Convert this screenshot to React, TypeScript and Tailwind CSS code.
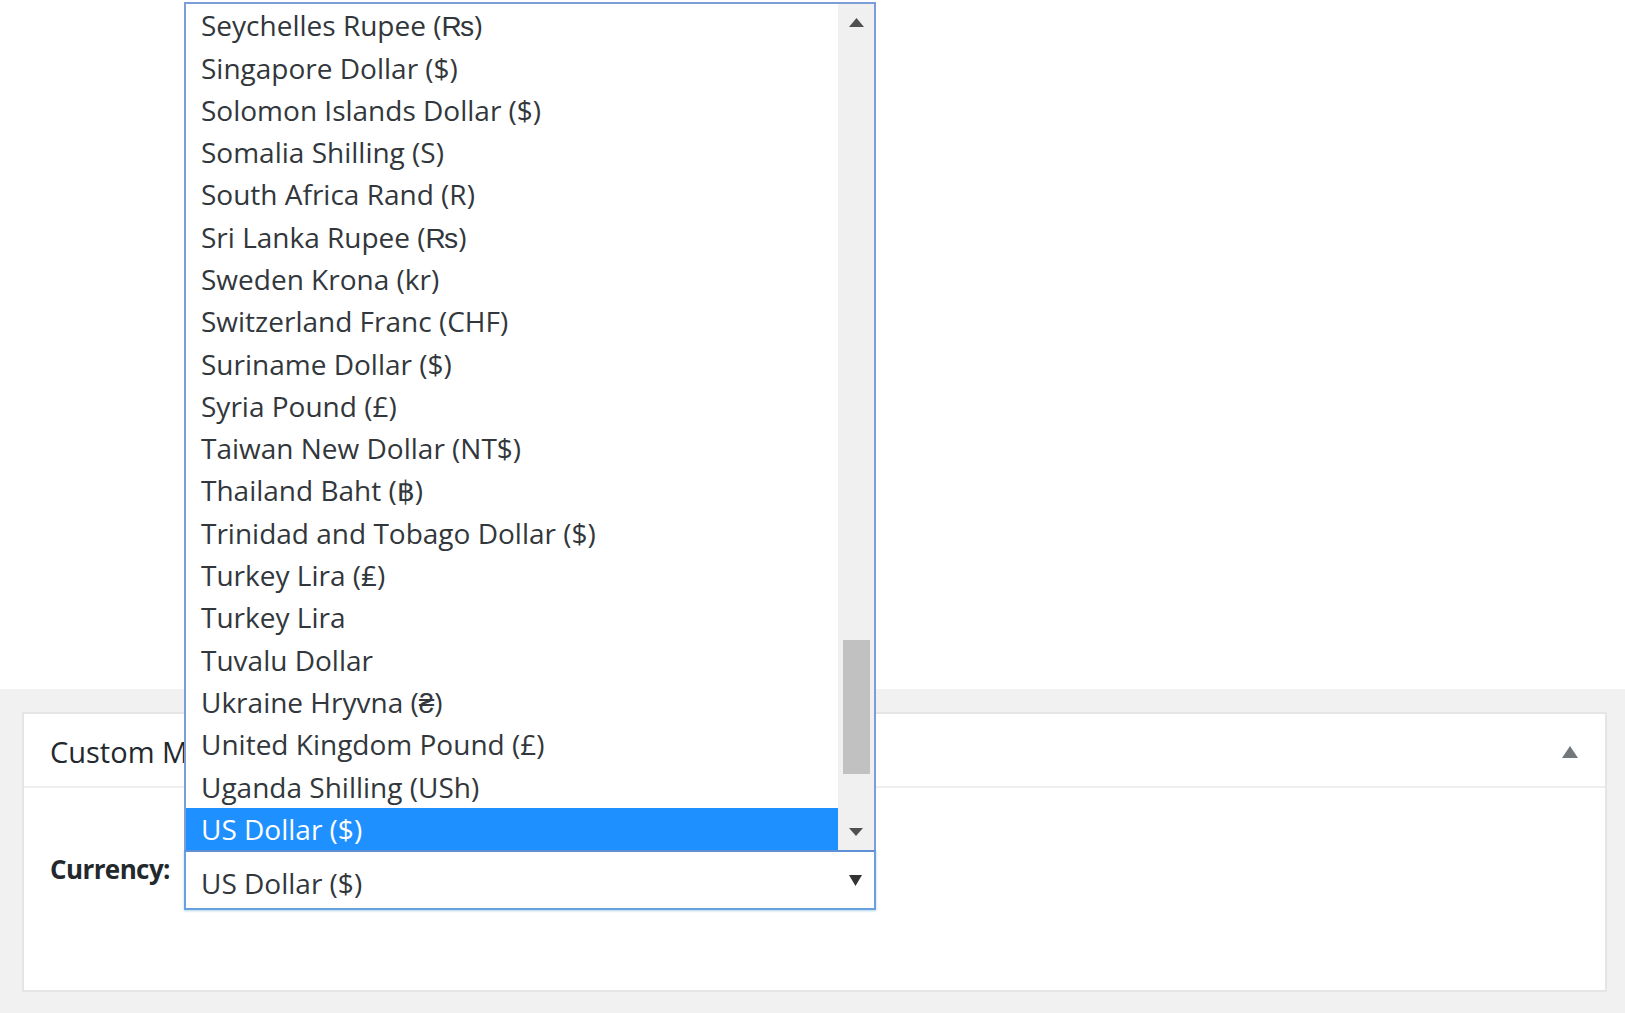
import React from 'react';

const currencies = [
  'Seychelles Rupee (₨)',
  'Singapore Dollar ($)',
  'Solomon Islands Dollar ($)',
  'Somalia Shilling (S)',
  'South Africa Rand (R)',
  'Sri Lanka Rupee (₨)',
  'Sweden Krona (kr)',
  'Switzerland Franc (CHF)',
  'Suriname Dollar ($)',
  'Syria Pound (£)',
  'Taiwan New Dollar (NT$)',
  'Thailand Baht (฿)',
  'Trinidad and Tobago Dollar ($)',
  'Turkey Lira (₤)',
  'Turkey Lira',
  'Tuvalu Dollar',
  'Ukraine Hryvna (₴)',
  'United Kingdom Pound (£)',
  'Uganda Shilling (USh)',
  'US Dollar ($)',
];

const selected = 'US Dollar ($)';

function Triangle({ up, className }: { up?: boolean; className?: string }) {
  return (
    <svg viewBox="0 0 10 6" className={className} preserveAspectRatio="none">
      {up ? <polygon points="5,0 10,6 0,6" fill="currentColor" /> : <polygon points="0,0 10,0 5,6" fill="currentColor" />}
    </svg>
  );
}

function Scrollbar() {
  return (
    <div className="flex w-[36px] flex-col bg-[#f0f0f0]">
      <div className="flex h-[36px] items-center justify-center text-[#505050]">
        <Triangle up className="h-[9px] w-[15px]" />
      </div>
      <div className="flex-1">
        <div className="ml-[5px] mt-[600px] h-[134px] w-[27px] bg-[#c1c1c1]" />
      </div>
      <div className="flex h-[36px] items-center justify-center text-[#505050]">
        <Triangle className="h-[8px] w-[14px]" />
      </div>
    </div>
  );
}

function CurrencySelect() {
  return (
    <div className="relative w-[692px]">
      <div className="absolute bottom-full left-0 z-10 flex w-full border-2 border-b-0 border-[#7c9ed8] bg-white">
        <ul className="flex-1">
          {currencies.map((c) => (
            <li
              key={c}
              className={`flex h-[42.3px] items-center whitespace-nowrap pl-[15px] text-[28px] ${
                c === selected ? 'bg-[#1e90ff] text-white' : 'text-[#32373c]'
              }`}
            >
              {c}
            </li>
          ))}
        </ul>
        <Scrollbar />
      </div>
      <div className="flex h-[60px] items-center justify-between border-2 border-[#68a0e0] border-t-[#5f8fd4] bg-white pl-[15px] pr-[12px] shadow-[0_1px_2px_rgba(30,140,190,0.35)]">
        <span className="pt-[6px] text-[28px] text-[#32373c]">US Dollar ($)</span>
        <Triangle className="h-[11px] w-[13px] text-[#333]" />
      </div>
    </div>
  );
}

export default function App() {
  return (
    <div className="min-h-[1013px] w-full bg-white font-['Open_Sans',sans-serif] text-[#32373c]">
      <div className="h-[689px]" />
      <div className="bg-[#f1f1f1] pb-[21px] pl-[22px] pr-[18px] pt-[23px]">
        <div className="flex h-[280px] flex-col border-2 border-[#e5e5e5] bg-white">
          <div className="flex h-[74px] items-center justify-between border-b-2 border-[#eeeeee] pl-[26px] pr-[27px] pt-[3px]">
            <h2 className="text-[29px] font-medium text-[#23282d]">Custom Meta Box</h2>
            <Triangle up className="h-[12px] w-[16px] text-[#72777c]" />
          </div>
          <div className="flex items-start pl-[26px] pt-[62px]">
            <label className="w-[134px] pt-[1px] text-[26px] font-bold leading-[36px] tracking-[-0.6px] text-[#23282d]">
              Currency:
            </label>
            <CurrencySelect />
          </div>
        </div>
      </div>
    </div>
  );
}
